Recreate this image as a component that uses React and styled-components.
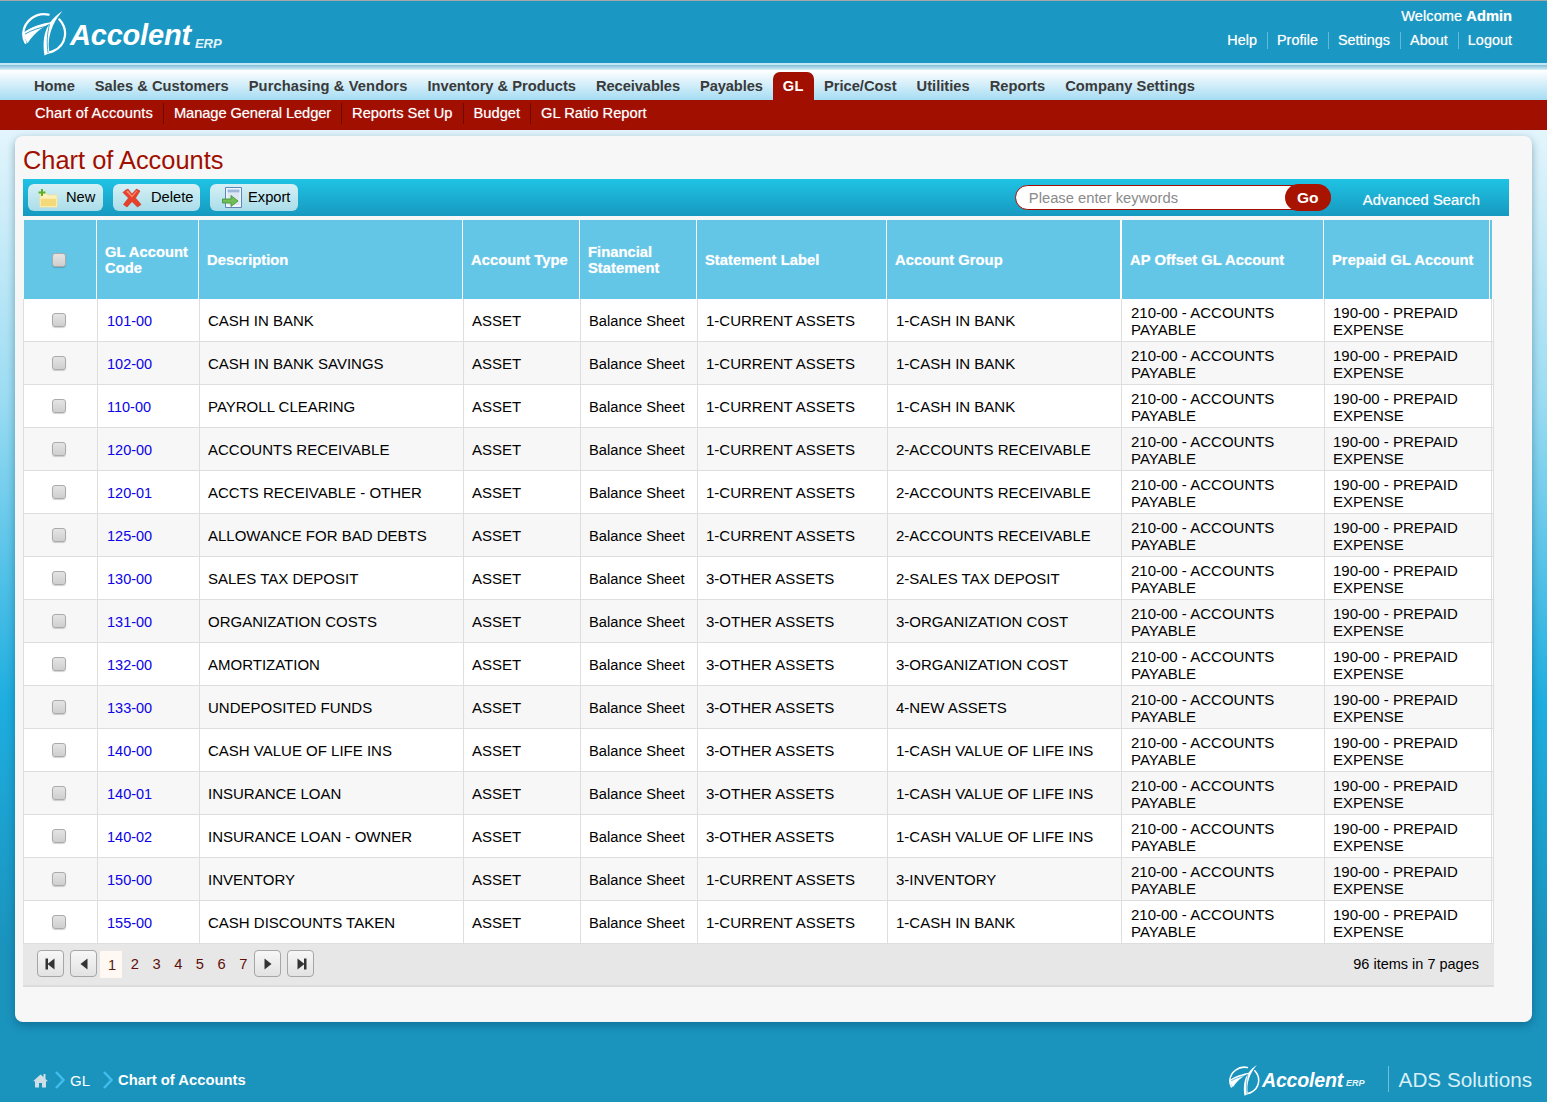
import React from "react";
import styled, { createGlobalStyle } from "styled-components";

const GlobalStyle = createGlobalStyle`
  html, body {
    margin: 0;
    padding: 0;
    background: #1a97c2;
    font-family: "Liberation Sans", Arial, sans-serif;
    color: #000;
  }
`;

const glow = "0 0 1px rgba(255, 255, 255, 0.55)";

const Page = styled.div`
  width: 1547px;
  height: 1102px;
  overflow: hidden;
  display: flex;
  flex-direction: column;
  background: linear-gradient(180deg, #e3f5fc 130px, #9bdcf2 400px, #1eaee0 700px, #1a93bd 950px);
`;

const Header = styled.header`
  height: 62px;
  flex: none;
  border-top: 1px solid #a8a8a8;
  background: #1a97c2;
  display: flex;
  justify-content: space-between;
  padding: 0 35px 0 22px;
`;

const LogoWrap = styled.div`
  display: flex;
  align-items: flex-start;
  padding-top: 10px;
`;

const LogoName = styled.span`
  color: #fff;
  font-size: ${(p) => p.size}px;
  font-weight: bold;
  font-style: italic;
  line-height: ${(p) => p.line}px;
  letter-spacing: -0.2px;
  margin-left: ${(p) => p.gap}px;
`;

const LogoErp = styled.span`
  color: #e6f5fa;
  font-size: ${(p) => p.size}px;
  font-weight: bold;
  font-style: italic;
  margin-left: ${(p) => p.gap}px;
  align-self: flex-end;
  line-height: ${(p) => p.line}px;
`;

const UserBox = styled.div`
  display: flex;
  flex-direction: column;
  align-items: flex-end;
  color: #fff;
  font-size: 14.7px;
  text-shadow: ${glow};
`;

const Welcome = styled.div`
  height: 17px;
  line-height: 17px;
  margin-top: 7px;
`;

const UserLinks = styled.div`
  display: flex;
  margin-top: 7px;
  font-size: 14.45px;
`;

const UserLink = styled.a`
  line-height: 17px;
  padding: 0 10px 0 9px;
  border-left: 1px solid #62b9d8;
  color: #fff;
  &:first-child {
    border-left: 0;
  }
  &:last-child {
    padding-right: 0;
  }
`;

const Band = styled.div`
  height: 7px;
  flex: none;
  background: linear-gradient(180deg, #c2e8f4 2px, #80bdd6 2px, #d6eff8);
`;

const MainNav = styled.nav`
  height: 30px;
  flex: none;
  display: flex;
  align-items: flex-end;
  padding-left: 24px;
  background: linear-gradient(180deg, #fff, #a5dcf3);
`;

const NavItem = styled.a`
  height: 28px;
  line-height: 28px;
  padding: 0 10px;
  font-size: 14.7px;
  font-weight: bold;
  letter-spacing: ${(p) => p.$track || 0}px;
  color: ${(p) => (p.$active ? "#fff" : "#3a3a3a")};
  background: ${(p) => (p.$active ? "#a00f00" : "transparent")};
  border-radius: 7px 7px 0 0;
`;

const SubNav = styled.nav`
  height: 30px;
  flex: none;
  display: flex;
  align-items: center;
  padding-left: 25px;
  background: #a00f00;
`;

const SubItem = styled.a`
  height: 21px;
  line-height: 21px;
  margin-top: -3px;
  padding: 0 10px;
  color: #fff;
  font-size: 14.7px;
  letter-spacing: ${(p) => p.$track || 0}px;
  text-shadow: ${glow};
  border-right: 1px solid #6b0a00;
  &:last-child {
    border-right: 0;
  }
`;

const Card = styled.main`
  margin: 6px 15px 0;
  height: 886px;
  flex: none;
  box-sizing: border-box;
  padding: 10px 8px 0;
  background: #f7f7f7;
  border-radius: 8px;
  box-shadow: 0 3px 8px rgba(0, 60, 90, 0.4);
`;

const Title = styled.h1`
  margin: 0;
  height: 33px;
  font-size: 25.4px;
  line-height: 28px;
  font-weight: normal;
  color: #a00f00;
`;

const Toolbar = styled.div`
  width: 1486px;
  height: 37px;
  display: flex;
  align-items: center;
  padding-left: 5px;
  box-sizing: border-box;
  background: linear-gradient(180deg, #1fc3e4, #1799c0);
`;

const ToolButton = styled.button`
  height: 27px;
  width: ${(p) => p.$w}px;
  margin-right: 10px;
  padding: 0 0 0 ${(p) => p.$pad}px;
  display: flex;
  align-items: center;
  gap: ${(p) => p.$gap}px;
  border: 0;
  border-radius: 6px;
  background: linear-gradient(180deg, #d6f0f5, #a9dde9);
  font-family: inherit;
  font-size: 14.7px;
  line-height: 25px;
  color: #000;
`;

const ToolLabel = styled.span`
  margin-top: -1px;
`;

const SearchBox = styled.div`
  width: 316px;
  height: 25px;
  margin-left: auto;
  box-sizing: border-box;
  display: flex;
  align-items: center;
  background: #fff;
  border: 1px solid #a00f00;
  border-radius: 13px;
`;

const SearchInput = styled.input`
  flex: 1;
  min-width: 0;
  border: 0;
  outline: 0;
  background: transparent;
  padding: 0 0 0 13px;
  font-family: inherit;
  font-size: 14.75px;
  &::placeholder {
    color: #8a8a8a;
    opacity: 1;
  }
`;

const GoButton = styled.button`
  width: 46px;
  height: 27px;
  margin: -1px -1px -1px 0;
  border: 0;
  border-radius: 14px;
  background: #a81400;
  color: #fff;
  font-family: inherit;
  font-size: 15.5px;
  font-weight: bold;
`;

const AdvancedLink = styled.a`
  margin: 4px 29px 0 32px;
  color: #fff;
  font-size: 14.85px;
  text-shadow: ${glow};
`;

const Grid = styled.div`
  width: 1471px;
  margin-top: 4px;
`;

const HeadRow = styled.div`
  display: grid;
  grid-template-columns: 73px 102px 264px 117px 117px 190px 234px 203px 166px 2px;
  height: 79px;
  margin-left: 1px;
`;

const HeadCell = styled.div`
  display: flex;
  align-items: center;
  justify-content: ${(p) => (p.$center ? "center" : "flex-start")};
  box-sizing: border-box;
  padding: ${(p) => (p.$center ? "0 2px 0 0" : `1px 6px 0 ${p.$double ? 9 : 8}px`)};
  background: #64c6e7;
  border-right: 1px solid #fff;
  box-shadow: ${(p) => (p.$double ? "inset 1px 0 0 #fff" : "none")};
  color: #fff;
  font-size: 14.8px;
  line-height: 16px;
  font-weight: bold;
  text-shadow: ${glow};
`;

const HeadSliver = styled.div`
  background: #64c6e7;
`;

const Row = styled.div`
  display: grid;
  grid-template-columns: 74px 102px 264px 117px 117px 190px 234px 203px 167px 2px;
  height: 43px;
  box-sizing: border-box;
  background: ${(p) => (p.$odd ? "#f7f7f7" : "#fff")};
  border-bottom: 1px solid #dedede;
  border-left: 1px solid #dedede;
`;

const Cell = styled.div`
  display: flex;
  align-items: center;
  box-sizing: border-box;
  padding: 1px 4px 0 8px;
  border-right: 1px solid #dedede;
  font-size: 15px;
  line-height: 17px;
`;

// mixed-case and digit-only cells sit a touch narrower than the capitals
const SmallCell = styled(Cell)`
  padding: 2px 4px 0 ${(p) => p.$left}px;
  font-size: ${(p) => p.$size}px;
`;

const CheckCell = styled(Cell)`
  justify-content: center;
  padding: 0 4px 0 0;
`;

const WrapCell = styled(Cell)`
  padding: 2px 4px 0 ${(p) => p.$left}px;
`;

const EndCell = styled(Cell)`
  padding: 0;
`;

const CodeLink = styled.a`
  color: #0b00e8;
`;

const Check = styled.input.attrs({ type: "checkbox" })`
  appearance: none;
  width: 14px;
  height: 14px;
  margin: 0;
  border: 1px solid #aaa;
  border-radius: 3px;
  background: linear-gradient(180deg, #e4e4e4, #cfcfcf);
  box-shadow: 0 1px 1px rgba(0, 0, 0, 0.18);
`;

const Pager = styled.div`
  height: 43px;
  box-sizing: border-box;
  display: flex;
  align-items: center;
  padding: 0 15px 0 14px;
  background: #e7e7e7;
  border-bottom: 2px solid #dcdcdc;
`;

const PageButton = styled.button`
  width: 27px;
  height: 27px;
  margin: -2px ${(p) => p.$mr ?? 6}px 0 0;
  padding: 0;
  display: flex;
  align-items: center;
  justify-content: center;
  box-sizing: border-box;
  border: 1px solid #a6a6a6;
  border-radius: 4px;
  background: linear-gradient(180deg, #f7f7f7, #e2e2e2);
`;

const PageNumbers = styled.div`
  display: flex;
  margin: 0 0 0 -3px;
`;

const PageNumber = styled.a`
  box-sizing: border-box;
  width: ${(p) => (p.$active ? 22 : 21.7)}px;
  height: 27px;
  margin-right: ${(p) => (p.$active ? 2 : 0)}px;
  padding-left: ${(p) => (p.$active ? 2 : 0)}px;
  line-height: ${(p) => (p.$active ? 29 : 27)}px;
  text-align: center;
  font-size: 14.7px;
  color: ${(p) => (p.$active ? "#5c1a10" : "#5e0f08")};
  background: ${(p) => (p.$active ? "#fff8f3" : "transparent")};
`;

const PageInfo = styled.span`
  margin: -2px 0 0 auto;
  font-size: 14.5px;
`;

const Footer = styled.footer`
  flex: 1;
  display: flex;
  align-items: flex-start;
  justify-content: space-between;
  padding: 0 15px 0 33px;
`;

const Crumbs = styled.div`
  display: flex;
  align-items: center;
  height: 20px;
  margin-top: 48px;
  color: #fff;
  font-size: 15px;
`;

const CrumbChevron = styled.svg`
  margin: 0 5px 0 ${(p) => p.$left}px;
`;

const CrumbCurrent = styled.span`
  font-weight: bold;
  font-size: 14.8px;
`;

const Brand = styled.div`
  display: flex;
  align-items: flex-start;
  margin-top: 43px;
`;

const BrandRule = styled.span`
  width: 1px;
  height: 26px;
  margin: 1px 10px 0 23px;
  background: #6cc0dc;
`;

const BrandName = styled.span`
  color: #d8f0f7;
  font-size: 20.7px;
  line-height: 30px;
`;

const LogoMark = ({ size }) => (
  <svg width={size} height={size} viewBox="0 0 44 44" fill="none">
    <path
      d="M26 3.600C14 .6 2 10 1.200 21.500c-.2 3.600.6 6.600 2.200 9.600"
      stroke="#fff"
      strokeWidth="2.200"
      strokeLinecap="round"
    />
    <path
      d="M36.600 8.200C45.500 18 43.600 33 31 39c-1.500.7-3 1.200-4.600 1.500"
      stroke="#fff"
      strokeWidth="2.200"
      strokeLinecap="round"
    />
    <path
      d="M39.500 0C30 6 23 15 21.500 27c-.7 6-.5 11 .5 16.500l5-2.500C25.500 34 25.800 27 28.500 19 30.500 12.500 34.500 6 39.500 0Z"
      fill="#fff"
    />
    <path
      d="M1 21.500C8 16 19 12 31 10.500 22 14.500 13 20 5.500 31.500 3.200 28 1.600 25 1 21.500Z"
      fill="#fff"
    />
    <path d="M3 22.500C10 18.500 18 16 26 14.500" stroke="#1a97c2" strokeWidth=".9" />
    <path d="M27 13C24.500 22 24 32 25.500 41" stroke="#1a97c2" strokeWidth=".8" />
  </svg>
);

const NewIcon = () => (
  <svg width="20" height="22" viewBox="0 0 20 22">
    <path d="M2 6h6l1.500 2H19v12H2Z" fill="#fdf3c0" stroke="#f0e2a0" />
    <path d="M3 10h15v9H3Z" fill="#f4d97a" />
    <path d="M3 10h15v2H3Z" fill="#fbeeb0" />
    <path d="M3 2h2v2.500h2.500v2H5V9H3V6.500H.5v-2H3Z" fill="#5caf2c" />
  </svg>
);

const DeleteIcon = () => (
  <svg width="20" height="20" viewBox="0 0 20 20">
    <path
      d="M3 2.500 6 1l4 5 4.500-5L18 3l-4.500 7L19 16.500 15.500 19 10 13.500 5 19 1.500 16.500 6.500 10 1 4.500Z"
      fill="#e8402a"
      stroke="#c9301c"
      strokeWidth=".6"
    />
    <path d="M4 3.500 6 2.500l4 5 4.500-5 1 .5L10 9.500Z" fill="#f98a70" />
  </svg>
);

const ExportIcon = () => (
  <svg width="21" height="22" viewBox="0 0 21 22">
    <path d="M3.500.5h16v20h-16Z" fill="#f1f5fb" stroke="#5f86b8" />
    <path d="M5.500 2.500h12v3h-12Z" fill="#9db8dc" />
    <path d="M5.500 6h12v12h-12Z" fill="#dce7f4" />
    <path d="M.5 12H9V8.500l7 5.500-7 5.500V16H.5Z" fill="#6fbf55" stroke="#3d8f35" strokeWidth=".8" />
  </svg>
);

const PagerIcon = ({ dir, bar }) => {
  const left = dir === "left";
  return (
    <svg width="14" height="14" viewBox="0 0 14 14" fill="#333">
      <path d={left ? "M10.500 1.500v11L3.500 7Z" : "M3.500 1.500v11l7-5.500Z"} />
      {bar && <rect x={left ? 1.5 : 10} y="1.5" width="2.5" height="11" />}
    </svg>
  );
};

const HomeIcon = () => (
  <svg width="15" height="15" viewBox="0 0 15 15" fill="#cfdfe5">
    <path d="M7.500 1.500 0 8.200h2v6.300h4V10h3v4.500h4V8.200h2l-2.500-2.300V1h-2v3.100Z" />
  </svg>
);

const Chevron = ({ left }) => (
  <CrumbChevron $left={left} width="10" height="18" viewBox="0 0 10 18" fill="none">
    <path d="M1 1l7.500 8L1 17" stroke="#3fbdee" strokeWidth="2.500" />
  </CrumbChevron>
);

const OFFSET = "210-00 - ACCOUNTS PAYABLE";
const PREPAID = "190-00 - PREPAID EXPENSE";

const accounts = [
  ["101-00", "CASH IN BANK", "1-CURRENT ASSETS", "1-CASH IN BANK"],
  ["102-00", "CASH IN BANK SAVINGS", "1-CURRENT ASSETS", "1-CASH IN BANK"],
  ["110-00", "PAYROLL CLEARING", "1-CURRENT ASSETS", "1-CASH IN BANK"],
  ["120-00", "ACCOUNTS RECEIVABLE", "1-CURRENT ASSETS", "2-ACCOUNTS RECEIVABLE"],
  ["120-01", "ACCTS RECEIVABLE - OTHER", "1-CURRENT ASSETS", "2-ACCOUNTS RECEIVABLE"],
  ["125-00", "ALLOWANCE FOR BAD DEBTS", "1-CURRENT ASSETS", "2-ACCOUNTS RECEIVABLE"],
  ["130-00", "SALES TAX DEPOSIT", "3-OTHER ASSETS", "2-SALES TAX DEPOSIT"],
  ["131-00", "ORGANIZATION COSTS", "3-OTHER ASSETS", "3-ORGANIZATION COST"],
  ["132-00", "AMORTIZATION", "3-OTHER ASSETS", "3-ORGANIZATION COST"],
  ["133-00", "UNDEPOSITED FUNDS", "3-OTHER ASSETS", "4-NEW ASSETS"],
  ["140-00", "CASH VALUE OF LIFE INS", "3-OTHER ASSETS", "1-CASH VALUE OF LIFE INS"],
  ["140-01", "INSURANCE LOAN", "3-OTHER ASSETS", "1-CASH VALUE OF LIFE INS"],
  ["140-02", "INSURANCE LOAN - OWNER", "3-OTHER ASSETS", "1-CASH VALUE OF LIFE INS"],
  ["150-00", "INVENTORY", "1-CURRENT ASSETS", "3-INVENTORY"],
  ["155-00", "CASH DISCOUNTS TAKEN", "1-CURRENT ASSETS", "1-CASH IN BANK"],
];

const navItems = [
  ["Home", 0],
  ["Sales & Customers", 0],
  ["Purchasing & Vendors", 0.1],
  ["Inventory & Products", 0],
  ["Receivables", -0.08],
  ["Payables", -0.12],
  ["GL", 0.4],
  ["Price/Cost", 0],
  ["Utilities", 0],
  ["Reports", 0],
  ["Company Settings", 0.05],
];

const subItems = [
  ["Chart of Accounts", 0.12],
  ["Manage General Ledger", -0.1],
  ["Reports Set Up", 0],
  ["Budget", 0],
  ["GL Ratio Report", 0],
];

export default function App() {
  return (
    <Page>
      <GlobalStyle />
      <Header>
        <LogoWrap>
          <LogoMark size={45} />
          <LogoName size={29} line={48} gap={3}>
            Accolent
          </LogoName>
          <LogoErp size={13} line={38} gap={4}>
            ERP
          </LogoErp>
        </LogoWrap>
        <UserBox>
          <Welcome>
            Welcome <b>Admin</b>
          </Welcome>
          <UserLinks>
            {["Help", "Profile", "Settings", "About", "Logout"].map((l) => (
              <UserLink key={l}>{l}</UserLink>
            ))}
          </UserLinks>
        </UserBox>
      </Header>
      <Band />
      <MainNav>
        {navItems.map(([label, track]) => (
          <NavItem key={label} $active={label === "GL"} $track={track}>
            {label}
          </NavItem>
        ))}
      </MainNav>
      <SubNav>
        {subItems.map(([label, track]) => (
          <SubItem key={label} $track={track}>
            {label}
          </SubItem>
        ))}
      </SubNav>
      <Card>
        <Title>Chart of Accounts</Title>
        <Toolbar>
          <ToolButton $w={75} $pad={10} $gap={8}>
            <NewIcon />
            <ToolLabel>New</ToolLabel>
          </ToolButton>
          <ToolButton $w={87} $pad={9} $gap={9}>
            <DeleteIcon />
            <ToolLabel>Delete</ToolLabel>
          </ToolButton>
          <ToolButton $w={88} $pad={12} $gap={5}>
            <ExportIcon />
            <ToolLabel>Export</ToolLabel>
          </ToolButton>
          <SearchBox>
            <SearchInput placeholder="Please enter keywords" />
            <GoButton>Go</GoButton>
          </SearchBox>
          <AdvancedLink>Advanced Search</AdvancedLink>
        </Toolbar>
        <Grid>
          <HeadRow>
            <HeadCell $center>
              <Check />
            </HeadCell>
            <HeadCell>GL Account Code</HeadCell>
            <HeadCell>Description</HeadCell>
            <HeadCell>Account Type</HeadCell>
            <HeadCell>Financial Statement</HeadCell>
            <HeadCell>Statement Label</HeadCell>
            <HeadCell>Account Group</HeadCell>
            <HeadCell $double>AP Offset GL Account</HeadCell>
            <HeadCell>Prepaid GL Account</HeadCell>
            <HeadSliver />
          </HeadRow>
          {accounts.map((a, i) => (
            <Row key={a[0]} $odd={i % 2 === 1}>
              <CheckCell>
                <Check />
              </CheckCell>
              <SmallCell $size={14.5} $left={9}>
                <CodeLink>{a[0]}</CodeLink>
              </SmallCell>
              <Cell>{a[1]}</Cell>
              <Cell>ASSET</Cell>
              <SmallCell $size={14.7} $left={8}>
                Balance Sheet
              </SmallCell>
              <Cell>{a[2]}</Cell>
              <Cell>{a[3]}</Cell>
              <WrapCell $left={9}>{OFFSET}</WrapCell>
              <WrapCell $left={8}>{PREPAID}</WrapCell>
              <EndCell />
            </Row>
          ))}
          <Pager>
            <PageButton>
              <PagerIcon dir="left" bar />
            </PageButton>
            <PageButton>
              <PagerIcon dir="left" />
            </PageButton>
            <PageNumbers>
              {[1, 2, 3, 4, 5, 6, 7].map((n) => (
                <PageNumber key={n} $active={n === 1}>
                  {n}
                </PageNumber>
              ))}
            </PageNumbers>
            <PageButton>
              <PagerIcon dir="right" />
            </PageButton>
            <PageButton>
              <PagerIcon dir="right" bar />
            </PageButton>
            <PageInfo>96 items in 7 pages</PageInfo>
          </Pager>
        </Grid>
      </Card>
      <Footer>
        <Crumbs>
          <HomeIcon />
          <Chevron left={7} />
          GL
          <Chevron left={13} />
          <CrumbCurrent>Chart of Accounts</CrumbCurrent>
        </Crumbs>
        <Brand>
          <LogoMark size={31} />
          <LogoName size={19.6} line={30} gap={2}>
            Accolent
          </LogoName>
          <LogoErp size={9} line={25} gap={3}>
            ERP
          </LogoErp>
          <BrandRule />
          <BrandName>ADS Solutions</BrandName>
        </Brand>
      </Footer>
    </Page>
  );
}
